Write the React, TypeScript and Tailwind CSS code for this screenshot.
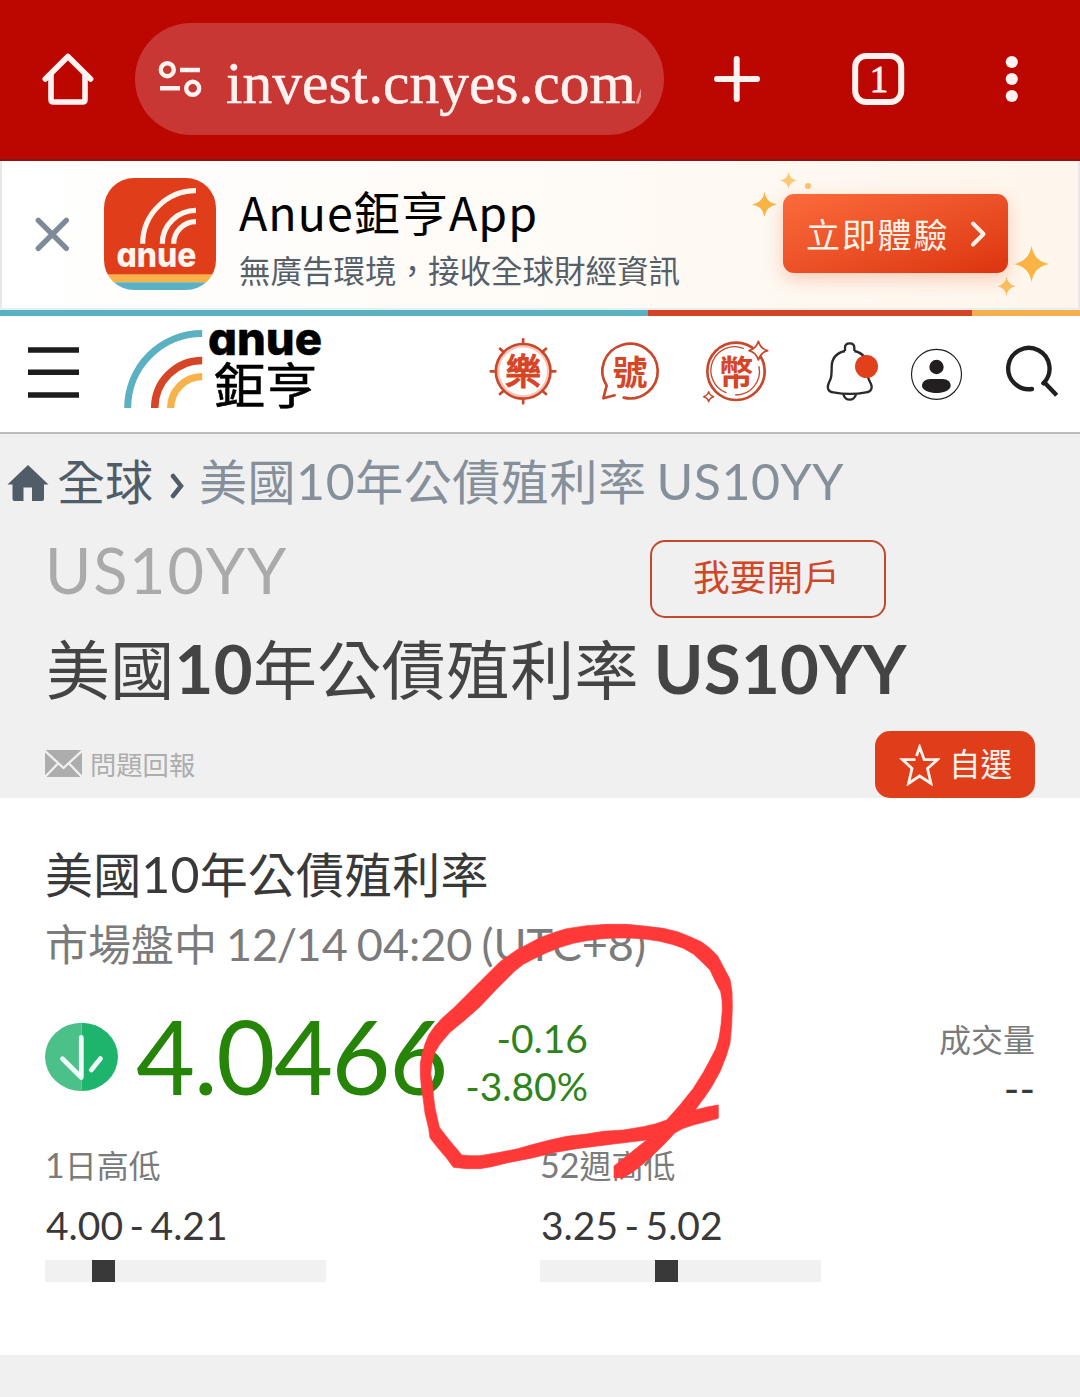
import React from "react";

const CJK = "font-['Noto_Sans_CJK_TC',sans-serif]";

function spark(cx: number, cy: number, r: number, k = 0.2) {
  const q = r * k;
  return `M${cx} ${cy - r}Q${cx + q * 0.7} ${cy - q * 0.7} ${cx + r} ${cy}Q${cx + q * 0.7} ${cy + q * 0.7} ${cx} ${cy + r}Q${cx - q * 0.7} ${cy + q * 0.7} ${cx - r} ${cy}Q${cx - q * 0.7} ${cy - q * 0.7} ${cx} ${cy - r}Z`;
}

function BrowserBar() {
  return (
    <header className="flex h-[161px] items-start border-b-2 border-[#8a1414] bg-[#bb0700]">
      <svg className="h-[159px] w-[135px] shrink-0" viewBox="0 0 135 159" fill="none" stroke="#fff3f1" strokeWidth="5.6" strokeLinejoin="round" strokeLinecap="round">
        <path d="M45.3 79 67.9 56.4 90.6 79M51 75V99.5Q51 102 53.5 102H82.500Q85 102 85 99.500V75" />
      </svg>
      <div className="mt-[23px] flex h-[112px] w-[529px] shrink-0 items-start overflow-hidden rounded-full bg-[#c83733]">
        <svg className="h-[112px] w-[91px] shrink-0" viewBox="135 23 91 112" fill="none" stroke="#fff3f1" strokeWidth="4.400">
          <circle cx="167.300" cy="69.700" r="6.500" />
          <circle cx="192.700" cy="88.300" r="6.500" />
          <path d="M180 70H200M160 88.300H180" />
        </svg>
        <div className="h-[112px] w-[415px] overflow-hidden whitespace-nowrap pt-[22px] font-['Liberation_Serif',serif] text-[59.500px] leading-[76px] text-[#fff3f1] [-webkit-text-stroke:0.5px_#fff3f1]">
          invest.cnyes.com<span className="text-[#f59a98] [-webkit-text-stroke:0px]">/</span>
        </div>
      </div>
      <svg className="h-[159px] w-[416px] shrink-0" viewBox="664 0 416 159" fill="none" stroke="#fff3f1" strokeLinecap="round">
        <path strokeWidth="6" d="M717 79H757M736.700 59V99" />
        <rect x="855.200" y="56" width="46" height="46" rx="11" strokeWidth="6" />
        <text x="879" y="91.500" textAnchor="middle" fill="#fff3f1" stroke="#fff3f1" strokeWidth="0.800" fontSize="37" fontFamily="Liberation Serif, serif">1</text>
        <g fill="#fff3f1" stroke="none">
          <circle cx="1011.800" cy="62" r="6.100" />
          <circle cx="1011.800" cy="79" r="6.100" />
          <circle cx="1011.800" cy="96" r="6.100" />
        </g>
      </svg>
    </header>
  );
}

function AppBanner() {
  return (
    <section className="relative flex h-[149px] border-x-2 border-b-2 border-x-[#e9e7e8] border-b-[#e6eeee] bg-gradient-to-r from-white to-[#fef6ec]">
      <svg className="h-[147px] w-[236px] shrink-0" viewBox="2 161 236 147" fill="none">
        <path d="M38.300 220.300 66.300 248.300M66.300 220.300 38.300 248.300" stroke="#7e8a98" strokeWidth="5.400" strokeLinecap="round" />
        <clipPath id="tile"><rect x="104" y="178" width="112" height="112" rx="30" /></clipPath>
        <g clipPath="url(#tile)">
          <path fill="#e03e1a" d="M104 178H216V275H104z" />
          <path fill="#f7b24a" d="M104 274.300H216V282.300H104z" />
          <path fill="#5bb1c1" d="M104 282.300H216V290H104z" />
        </g>
        <g stroke="#fff5ef" strokeWidth="5.200">
          <path d="M142.700 243.700A53.300 53 0 0 1 196 190.700" />
          <path d="M162.300 243.700A33.700 33.400 0 0 1 196 210.300" />
          <path d="M173.700 243.700A22.300 22 0 0 1 196 221.700" />
        </g>
        <text x="116.500" y="266.500" textLength="80" lengthAdjust="spacingAndGlyphs" fontSize="34" fontWeight="800" fontFamily="Inter, sans-serif" style={{ fontFeatureSettings: "'cv11'" }} fill="#fff5ef">anue</text>
      </svg>
      <div className={`${CJK} w-[460px] shrink-0 whitespace-nowrap pl-px pt-[17px]`}>
        <div className="h-[66px] text-[46.500px] leading-[66px] tracking-[1.050px] text-black">Anue鉅亨App</div>
        <div className="h-[50px] text-[31.500px] leading-[50px] text-[#555f6a]">無廣告環境，接收全球財經資訊</div>
      </div>
      <button className={`${CJK} ml-[85px] mt-[33px] flex h-[79px] w-[225px] items-center rounded-[11px] bg-gradient-to-br from-[#fb6b3b] to-[#dc330d] pl-[23px] text-[34px] tracking-[1.800px] text-[#fff3ea] shadow-[0_6px_18px_rgba(240,100,50,0.3)]`}>
        立即體驗
        <svg className="ml-[21px] h-[28px] w-[18px]" viewBox="0 0 18 28" fill="none" stroke="#fff3ea" strokeWidth="4" strokeLinecap="round" strokeLinejoin="round">
          <path d="M3 3.500 13.500 14 3 24.500" />
        </svg>
      </button>
      <svg className="pointer-events-none absolute right-0 top-0 h-[147px] w-[338px]" viewBox="740 161 338 147" fill="#f9b445">
        <path d={spark(764.500, 204.500, 12.500)} />
        <path d={spark(788.500, 180.500, 8.500)} opacity="0.700" />
        <circle cx="808" cy="186" r="3" opacity="0.800" />
        <path d={spark(1031.500, 264, 18)} />
        <path d={spark(1006.500, 286.300, 9.500)} opacity="0.850" />
      </svg>
    </section>
  );
}

function SiteNav() {
  const ink = "#c9472a";
  return (
    <nav className="flex h-[118px] border-b-2 border-[#bdbdbd] bg-white">
      <svg className="h-[116px] w-[100px] shrink-0" viewBox="0 316 100 116" stroke="#1c1c1c" strokeWidth="5.600">
        <path d="M28 350H79M28 372.300H79M28 395H79" />
      </svg>
      <svg className="h-[116px] w-[240px] shrink-0 overflow-visible" viewBox="100 316 240 116" fill="none" strokeWidth="7">
        <path stroke="#5bb1c1" d="M127.700 408A74.500 74.600 0 0 1 202.200 333.400" />
        <path stroke="#d64525" strokeWidth="7.500" d="M154.700 408A47.500 47.600 0 0 1 202.200 360.400" />
        <path stroke="#f7b24a" strokeWidth="7.300" d="M170.700 408A31.500 31.400 0 0 1 202.200 376.600" />
        <text x="208" y="355" textLength="114" lengthAdjust="spacingAndGlyphs" fontSize="46" fontWeight="800" fontFamily="Inter, sans-serif" style={{ fontFeatureSettings: "'cv11'" }} fill="#000" stroke="#000" strokeWidth="0.500">anue</text>
        <text x="214" y="403.500" textLength="103" lengthAdjust="spacingAndGlyphs" fontSize="49" fontFamily="Noto Sans CJK TC, sans-serif" fill="#000" stroke="#000" strokeWidth="0.600">鉅亨</text>
      </svg>
      <svg className="ml-[140px] h-[116px] w-[100px] shrink-0" viewBox="30 -12 300 348" fill="none" stroke={ink} strokeWidth="8">
        <circle cx="159.500" cy="154" r="75" stroke="#fbc4b6" strokeWidth="7" />
        <circle cx="159.500" cy="154" r="82" />
        <path strokeLinecap="round" d="M159.500 58V70M159.500 238V250M62 154H76M244 154H256M90 86 101 96M228 86 217 96M90 222 101 212M228 222 217 212" />
        <text x="159.500" y="195" textAnchor="middle" fontSize="108" fontWeight="500" fontFamily="Noto Sans CJK TC, sans-serif" fill="#d64525" stroke="#d64525" strokeWidth="3">樂</text>
      </svg>
      <svg className="h-[116px] w-[100px] shrink-0" viewBox="330 -12 300 348" fill="none" stroke={ink} strokeWidth="8" strokeLinecap="round" strokeLinejoin="round">
        <path d="M461 233A83 82 0 1 0 410 197L400 235 434 226" />
        <text x="480" y="195" textAnchor="middle" fontSize="104" fontWeight="700" fontFamily="Noto Sans CJK TC, sans-serif" fill="#d64525" stroke="none">號</text>
      </svg>
      <svg className="h-[116px] w-[140px] shrink-0" viewBox="630 -12 420 348" fill="none" stroke={ink} strokeWidth="8">
        <circle cx="798" cy="154" r="86" />
        <path strokeWidth="4" strokeLinecap="round" d="M820 85A71 71 0 0 0 768 218M797 225A71 71 0 0 0 867 140" />
        <path d={spark(865, 92, 28, 0.3)} fill="#fff" strokeWidth="5" strokeLinejoin="round" />
        <path d={spark(716, 230, 15, 0.3)} fill="#fff" strokeWidth="4.500" strokeLinejoin="round" />
        <text x="798" y="194" textAnchor="middle" fontSize="104" fontWeight="700" fontFamily="Noto Sans CJK TC, sans-serif" fill="#d64525" stroke="none">幣</text>
      </svg>
      <svg className="h-[116px] w-[70px] shrink-0" viewBox="300 468 210 348" fill="none" stroke="#2a2a2c" strokeWidth="7" strokeLinejoin="round">
        <path d="M375 573V563Q375 550 389 550Q403 550 403 563V573" />
        <path d="M375 573C348 579 335 597 335 622C335 652 333 656 326 670C320 684 325 696 340 697C372 703 408 703 438 697C453 696 459 684 452 670C445 656 442 652 442 622C442 597 430 579 403 573" />
        <path d="M370 703Q375 719 389 719Q403 719 408 703" />
        <circle cx="439.500" cy="619.500" r="34.500" fill="#e2401b" stroke="none" />
      </svg>
      <svg className="ml-[10px] h-[116px] w-[80px] shrink-0" viewBox="540 468 240 348" fill="#231f20">
        <circle cx="649.500" cy="643" r="75" fill="none" stroke="#231f20" strokeWidth="3.500" />
        <circle cx="649.500" cy="621" r="21.500" />
        <path d="M632 657H667C684 657 692 666 692 678C690 692 670 699 649.500 699C629 699 608 692 606 678C606 666 615 657 632 657Z" />
      </svg>
      <svg className="ml-[10px] h-[116px] w-[90px] shrink-0" viewBox="810 468 270 348" fill="none" stroke="#1f1f1f" strokeWidth="13" strokeLinejoin="round">
        <path strokeLinecap="round" d="M936 687A62 62 0 1 1 970 670" />
        <path d="M970 664 1010 706" />
      </svg>
    </nav>
  );
}

function Masthead() {
  return (
    <section className="h-[364px] bg-[#f0f0f0] font-['Lato','Noto_Sans_CJK_TC',sans-serif]">
      <div className="flex h-[94px] whitespace-nowrap text-[50px] leading-[95px] text-[#86909b]">
        <svg className="h-[94px] w-[57px] shrink-0" viewBox="0 434 57 94" fill="#505d68">
          <path d="M28 465 48.500 484.500H44V499Q44 501 42 501H32V487.500H23.500V501H14.500Q12.500 501 12.500 499V484.500H7.500Z" />
        </svg>
        <div className="flex w-[142px] items-center text-[48px] text-[#505d68]">
          全球
          <svg className="ml-[17px] mt-[9px] h-[26px] w-[16px]" viewBox="0 0 16 26" fill="none" stroke="#505d68" strokeWidth="4.500" strokeLinecap="round">
            <path d="M3 3 11 13 3 23" />
          </svg>
        </div>
        <span className="tracking-[0.550px] [word-spacing:-3.5px]"><span className="text-[48px]">美國</span>10<span className="text-[48px]">年公債殖利率</span> US10YY</span>
      </div>
      <div className="flex h-[94px] items-start">
        <div className="w-[605px] pl-[45px] text-[63px] leading-[83px] tracking-[1.800px] text-[#aaaaaa]">US10YY</div>
        <button className="ml-[45px] mt-3 h-[78px] w-[236px] rounded-[15px] border-2 border-[#c2492e] pb-1 pr-[3px] text-[36.700px] leading-[70px] text-[#cf4726]">我要開戶</button>
      </div>
      <h1 className="h-[92px] whitespace-nowrap pl-[46px] text-[67px] font-bold leading-[93px] tracking-[0.300px] text-[#444444] [word-spacing:-1.5px]">
        <span className="text-[64px] font-normal">美國</span>10<span className="text-[64px] font-normal">年公債殖利率</span> US10YY
      </h1>
      <div className="flex h-[84px] items-end justify-between pl-[45px] pr-[45px]">
        <div className="flex h-[67px] items-center pt-[2px] text-[26.300px] text-[#adadad]">
          <svg className="mr-[8px] mt-[-5px] h-[27px] w-[37px]" viewBox="0 0 37 27">
            <path fill="#adadad" d="M0 0H37V27H0z" />
            <path d="M-1 0 18.500 18 38 0M-1 28 13 13.500M38 28 24 13.500" fill="none" stroke="#f0f0f0" strokeWidth="2.300" />
          </svg>
          問題回報
        </div>
        <button className="flex h-[67px] w-[160px] items-center rounded-[15px] bg-[#e03e1a] pl-[24px] text-[31.500px] text-[#fff3ee]">
          <svg className="mr-[9px] h-[42px] w-[41px]" viewBox="0 0 41 42" fill="none" stroke="#fff3ee" strokeWidth="2.800">
            <path d="M16.500 15.700H3.500L13 24.500 9.500 39.500 20.600 32 32 39.500 28.500 24.500 38.500 15.700H25.200L20.600 3 17.500 12" />
          </svg>
          自選
        </button>
      </div>
    </section>
  );
}

function Range({ label, value, marker }: { label: React.ReactNode; value: string; marker: number }) {
  return (
    <div className="w-[495px]">
      <div className="h-[62px] text-[34px] leading-[62px] text-[#7b7b7b]">{label}</div>
      <div className="h-[64px] pl-px text-[39px] leading-[59px] text-[#393939] [word-spacing:-3.5px]">{value}</div>
      <div className="h-[22px] w-[281px] bg-[#f1f1f1]">
        <div className="h-full w-[23px] bg-[#393939]" style={{ marginLeft: marker }} />
      </div>
    </div>
  );
}

function Quote() {
  return (
    <section className="relative h-[557px] whitespace-nowrap bg-white pl-[45px] pt-[40px] font-['Lato','Noto_Sans_CJK_TC',sans-serif]">
      <h2 className="h-[71px] text-[50px] leading-[73px] tracking-[0.150px] text-[#393939]">
        <span className="text-[48px]">美國</span>10<span className="text-[48px]">年公債殖利率</span>
      </h2>
      <div className="h-[68px] text-[45px] leading-[71px] text-[#7b7b7b] [word-spacing:-2.5px]">
        <span className="text-[43px]">市場盤中</span> 12<span className="-mx-[1.500px]">/</span>14 04:20 (UTC+8)
      </div>
      <div className="flex h-[157px]">
        <svg className="h-[157px] w-[91px] shrink-0" viewBox="45 977 91 157" fill="none">
          <path fill="#4bc088" d="M81.500 1022.700A36.500 34.150 0 0 0 81.500 1091z" />
          <path fill="#1fb46c" d="M81.500 1022.700A36.500 34.150 0 0 1 81.500 1091z" />
          <path stroke="#f0fff7" strokeWidth="4.800" strokeLinecap="round" strokeLinejoin="round" d="M81.300 1037.500V1077.500L62.500 1058.700M91.300 1070 100.500 1058.500" />
        </svg>
        <div className="w-[317px] text-[102px] leading-[157px] tracking-[-1.500px] text-[#268509]">4.0466</div>
        <div className="w-[135px] pt-[38px] text-right text-[39px] leading-[47.500px] text-[#2f831b]">
          <div>-0.16</div>
          <div>-3.80%</div>
        </div>
        <div className="ml-auto pr-[45px] pt-[38px] text-right text-[32px] leading-[50px] text-[#7b7b7b]">
          <div>成交量</div>
          <div className="text-[42px] leading-[47px] text-[#393939]">--</div>
        </div>
      </div>
      <div className="flex">
        <Range label={<>1<span className="text-[32px]">日高低</span></>} value="4.00 - 4.21" marker={47} />
        <Range label={<>52<span className="text-[32px]">週高低</span></>} value="3.25 - 5.02" marker={115} />
      </div>
      <svg className="pointer-events-none absolute left-[400px] top-[112px] h-[290px] w-[360px]" viewBox="0 0 1080 870">
        <path
          fill="#ff3838"
          stroke="#ff3838"
          strokeWidth="2"
          strokeLinejoin="round"
          fillRule="evenodd"
          d="M642 803V768L690 730 740 690 640 702 530 716 460 728 400 743 320 759 275 770 240 776 200 776 160 772 140 745 112 712 90 684 86 655 75 610 70 570 64 530 61 495 61 460 67 430 75 402 86 375 102 352 126 325 160 295 220 235 300 155 350 120 420 83 460 68 500 56 560 47 620 43 680 43 740 49 790 55 835 66 870 80 905 96 930 115 953 138 970 170 990 208 996 245 997 290 995 345 990 400 978 440 960 485 935 530 915 560 885 600 925 590 955 585V625L925 633 880 645 850 655 825 668 800 695 770 725 735 757 700 785 670 803ZM345 182 370 163 400 147 440 128 480 112 520 100 560 92 600 87 640 84 690 84 740 88 780 94 820 104 850 115 880 132 905 155 930 180 945 212 962 245 966 270 967 300 963 345 957 385 948 415 930 450 910 487 880 535 840 585 800 630 765 642 730 650 670 660 610 664 560 672 500 679 450 690 400 703 350 717 300 727 240 737 210 737 185 735 175 722 160 705 140 680 118 652 112 625 105 595 100 555 98 525 92 490 96 460 104 428 120 402 150 367 195 330 240 290 290 237Z"
        />
      </svg>
    </section>
  );
}

export default function App() {
  return (
    <main className="h-[1397px] w-[1080px] overflow-hidden bg-[#f0f0f0]">
      <BrowserBar />
      <AppBanner />
      <div className="flex h-[6px]">
        <div className="w-[648px] bg-[#5bb1c1]" />
        <div className="w-[324px] bg-[#d34324]" />
        <div className="flex-1 bg-[#f4b04c]" />
      </div>
      <SiteNav />
      <Masthead />
      <Quote />
    </main>
  );
}
